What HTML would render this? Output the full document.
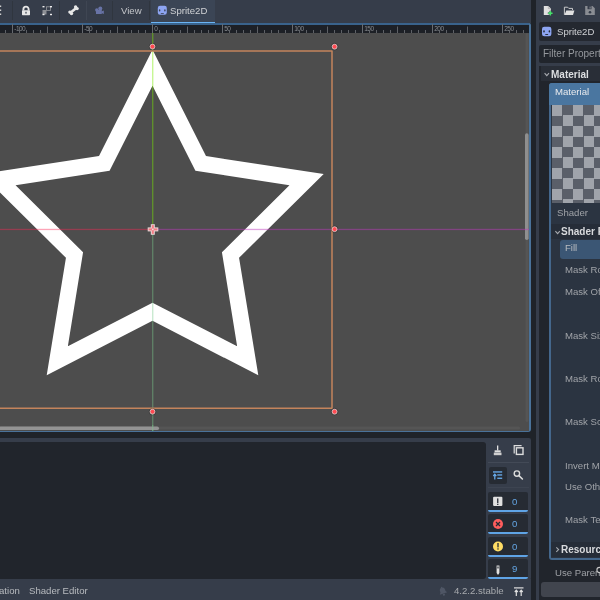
<!DOCTYPE html>
<html><head><meta charset="utf-8">
<style>
*{box-sizing:border-box;margin:0;padding:0}
html,body{width:600px;height:600px;overflow:hidden;background:#1f2329;font-family:"Liberation Sans",sans-serif;font-size:9.6px;color:#c8cacd}
.a{position:absolute}
.t{position:absolute;white-space:nowrap;line-height:12px;will-change:transform}
svg{position:absolute;overflow:visible;will-change:transform}
</style></head><body>
<!-- top toolbar -->
<div class="a" style="left:0;top:0;width:531px;height:23px;background:#363d4a"></div>
<div class="a" style="left:150.5px;top:0;width:64px;height:23px;background:#3b4555"></div>
<div class="a" style="left:150.5px;top:21.8px;width:64px;height:1.5px;background:#6ab4f5"></div>
<div class="a" style="left:12px;top:1px;width:1px;height:19px;background:#30363f"></div>
<div class="a" style="left:59px;top:1px;width:1px;height:19px;background:#30363f"></div>
<div class="a" style="left:86px;top:1px;width:1px;height:19px;background:#3f4653"></div>
<div class="a" style="left:112px;top:1px;width:1px;height:19px;background:#30363f"></div>
<div class="a" style="left:148.5px;top:1px;width:1px;height:19px;background:#30363f"></div>
<div class="t" style="left:120.5px;top:5px;color:#c4c6ca">View</div>
<div class="t" style="left:170px;top:5px;color:#cfd1d4">Sprite2D</div>
<svg style="left:0;top:0" width="600" height="40">
  <!-- partial dots at left -->
  <rect x="0" y="5.5" width="1.2" height="1.5" fill="#d0d0d0"/>
  <rect x="0" y="9.5" width="1.2" height="1.5" fill="#d0d0d0"/>
  <rect x="0" y="13.5" width="1.2" height="1.5" fill="#d0d0d0"/>
  <!-- lock -->
  <path d="M23.4,10.5 V9.2 A2.6,2.6 0 0 1 28.6,9.2 V10.5" fill="none" stroke="#e6e6e6" stroke-width="1.9"/>
  <rect x="22" y="10.2" width="8" height="5" rx="0.6" fill="#e6e6e6"/>
  <rect x="25.4" y="11.8" width="1.2" height="1.8" fill="#363d4a"/>
  <!-- group icon -->
  <rect x="42.5" y="10" width="4" height="4.5" fill="#8e9095"/>
  <rect x="46.5" y="6.8" width="4" height="3.6" fill="none" stroke="#8e9095" stroke-width="0.9"/>
  <rect x="42.5" y="6" width="2" height="1.4" fill="#eeeeee"/>
  <rect x="50" y="6" width="2" height="1.4" fill="#eeeeee"/>
  <rect x="42.5" y="13.8" width="2" height="1.4" fill="#eeeeee"/>
  <rect x="50" y="13.8" width="2" height="1.4" fill="#eeeeee"/>
  <!-- bone -->
  <g fill="#e8e8e8">
    <line x1="71" y1="12.3" x2="76" y2="8.3" stroke="#e8e8e8" stroke-width="2.6"/>
    <circle cx="69.9" cy="12.1" r="1.7"/><circle cx="71.5" cy="13.6" r="1.7"/>
    <circle cx="75.6" cy="7" r="1.7"/><circle cx="77.1" cy="8.6" r="1.7"/>
  </g>
  <!-- camera -->
  <g fill="#6873a6">
    <circle cx="96.8" cy="10" r="1.7"/><circle cx="100.3" cy="8.6" r="2"/>
    <rect x="96" y="10" width="5.8" height="4"/>
    <path d="M101.5,11.6 L103.8,10.4 V13.9 L101.5,12.9Z"/>
  </g>
  <!-- sprite2d icon tab -->
  <rect x="157.8" y="5.8" width="9" height="9" rx="2.2" fill="#8da5f3"/>
  <ellipse cx="159.6" cy="10.4" rx="0.75" ry="1.1" fill="#3c4453"/>
  <ellipse cx="164.9" cy="10.4" rx="0.75" ry="1.1" fill="#3c4453"/>
  <path d="M160.8,13 H163.8 V13.8 H160.8Z" fill="#3c4453"/>
  <!-- inspector toolbar -->
  <path d="M543.8,6 H548.3 L550.9,8.6 V15 H543.8Z" fill="#e0e0e0"/>
  <path d="M548.3,6 V8.6 H550.9" fill="#9a9a9a"/>
  <path d="M549.2,11 H551.4 V13 H553.4 V15 H551.4 V17 H549.2 V15 H547.2 V13 H549.2Z" fill="#45e06a" transform="translate(0,-1.6) scale(1)"/>
  <path d="M564.4,7.2 H567.6 L568.8,8.4 H572.5 V10 H566 L564.4,14.8Z" fill="none" stroke="#d8d8d8" stroke-width="0.9"/>
  <path d="M566.3,10.4 H574.4 L573,15 H564.4Z" fill="#e0e0e0"/>
  <path d="M585.2,6 H592.5 L594.8,8.3 V15 H585.2Z" fill="#8a8d93"/>
  <rect x="587.5" y="6" width="4" height="3.2" fill="#363d4a"/>
  <rect x="589.6" y="6.6" width="1" height="2" fill="#8a8d93"/>
  <circle cx="590" cy="12.3" r="1.3" fill="#363d4a"/>
</svg>
<!-- viewport -->
<div class="a" style="left:-4px;top:23px;width:535px;height:409.2px;background:#4a7299;border-radius:0 2px 3px 0"></div>
<div class="a" style="left:0;top:23px;width:529px;height:1.6px;background:#3a638c"></div>
<div class="a" style="left:0;top:24.5px;width:529px;height:8.5px;background:#1d2026"></div>
<div class="a" style="left:0;top:33px;width:529px;height:398px;background:#4d4d4d"></div>
<svg style="left:0;top:0" width="600" height="440">
<rect x="5.0" y="30" width="1" height="3" fill="#5e6167"/>
<rect x="12.0" y="24" width="1" height="9" fill="#666a70"/>
<text x="14.3" y="30.6" fill="#8a8d92" font-size="6.5" letter-spacing="-0.55">-100</text>
<rect x="19.0" y="30" width="1" height="3" fill="#5e6167"/>
<rect x="26.0" y="30" width="1" height="3" fill="#5e6167"/>
<rect x="33.0" y="30" width="1" height="3" fill="#5e6167"/>
<rect x="40.0" y="30" width="1" height="3" fill="#5e6167"/>
<rect x="47.0" y="26.5" width="1" height="6.5" fill="#5e6167"/>
<rect x="54.0" y="30" width="1" height="3" fill="#5e6167"/>
<rect x="61.0" y="30" width="1" height="3" fill="#5e6167"/>
<rect x="68.0" y="30" width="1" height="3" fill="#5e6167"/>
<rect x="75.0" y="30" width="1" height="3" fill="#5e6167"/>
<rect x="82.0" y="24" width="1" height="9" fill="#666a70"/>
<text x="84.3" y="30.6" fill="#8a8d92" font-size="6.5" letter-spacing="-0.55">-50</text>
<rect x="89.0" y="30" width="1" height="3" fill="#5e6167"/>
<rect x="96.0" y="30" width="1" height="3" fill="#5e6167"/>
<rect x="103.0" y="30" width="1" height="3" fill="#5e6167"/>
<rect x="110.0" y="30" width="1" height="3" fill="#5e6167"/>
<rect x="117.0" y="26.5" width="1" height="6.5" fill="#5e6167"/>
<rect x="124.0" y="30" width="1" height="3" fill="#5e6167"/>
<rect x="131.0" y="30" width="1" height="3" fill="#5e6167"/>
<rect x="138.0" y="30" width="1" height="3" fill="#5e6167"/>
<rect x="145.0" y="30" width="1" height="3" fill="#5e6167"/>
<rect x="152.0" y="24" width="1" height="9" fill="#666a70"/>
<text x="154.3" y="30.6" fill="#8a8d92" font-size="6.5" letter-spacing="-0.55">0</text>
<rect x="159.0" y="30" width="1" height="3" fill="#5e6167"/>
<rect x="166.0" y="30" width="1" height="3" fill="#5e6167"/>
<rect x="173.0" y="30" width="1" height="3" fill="#5e6167"/>
<rect x="180.0" y="30" width="1" height="3" fill="#5e6167"/>
<rect x="187.0" y="26.5" width="1" height="6.5" fill="#5e6167"/>
<rect x="194.0" y="30" width="1" height="3" fill="#5e6167"/>
<rect x="201.0" y="30" width="1" height="3" fill="#5e6167"/>
<rect x="208.0" y="30" width="1" height="3" fill="#5e6167"/>
<rect x="215.0" y="30" width="1" height="3" fill="#5e6167"/>
<rect x="222.0" y="24" width="1" height="9" fill="#666a70"/>
<text x="224.3" y="30.6" fill="#8a8d92" font-size="6.5" letter-spacing="-0.55">50</text>
<rect x="229.0" y="30" width="1" height="3" fill="#5e6167"/>
<rect x="236.0" y="30" width="1" height="3" fill="#5e6167"/>
<rect x="243.0" y="30" width="1" height="3" fill="#5e6167"/>
<rect x="250.0" y="30" width="1" height="3" fill="#5e6167"/>
<rect x="257.0" y="26.5" width="1" height="6.5" fill="#5e6167"/>
<rect x="264.0" y="30" width="1" height="3" fill="#5e6167"/>
<rect x="271.0" y="30" width="1" height="3" fill="#5e6167"/>
<rect x="278.0" y="30" width="1" height="3" fill="#5e6167"/>
<rect x="285.0" y="30" width="1" height="3" fill="#5e6167"/>
<rect x="292.0" y="24" width="1" height="9" fill="#666a70"/>
<text x="294.3" y="30.6" fill="#8a8d92" font-size="6.5" letter-spacing="-0.55">100</text>
<rect x="299.0" y="30" width="1" height="3" fill="#5e6167"/>
<rect x="306.0" y="30" width="1" height="3" fill="#5e6167"/>
<rect x="313.0" y="30" width="1" height="3" fill="#5e6167"/>
<rect x="320.0" y="30" width="1" height="3" fill="#5e6167"/>
<rect x="327.0" y="26.5" width="1" height="6.5" fill="#5e6167"/>
<rect x="334.0" y="30" width="1" height="3" fill="#5e6167"/>
<rect x="341.0" y="30" width="1" height="3" fill="#5e6167"/>
<rect x="348.0" y="30" width="1" height="3" fill="#5e6167"/>
<rect x="355.0" y="30" width="1" height="3" fill="#5e6167"/>
<rect x="362.0" y="24" width="1" height="9" fill="#666a70"/>
<text x="364.3" y="30.6" fill="#8a8d92" font-size="6.5" letter-spacing="-0.55">150</text>
<rect x="369.0" y="30" width="1" height="3" fill="#5e6167"/>
<rect x="376.0" y="30" width="1" height="3" fill="#5e6167"/>
<rect x="383.0" y="30" width="1" height="3" fill="#5e6167"/>
<rect x="390.0" y="30" width="1" height="3" fill="#5e6167"/>
<rect x="397.0" y="26.5" width="1" height="6.5" fill="#5e6167"/>
<rect x="404.0" y="30" width="1" height="3" fill="#5e6167"/>
<rect x="411.0" y="30" width="1" height="3" fill="#5e6167"/>
<rect x="418.0" y="30" width="1" height="3" fill="#5e6167"/>
<rect x="425.0" y="30" width="1" height="3" fill="#5e6167"/>
<rect x="432.0" y="24" width="1" height="9" fill="#666a70"/>
<text x="434.3" y="30.6" fill="#8a8d92" font-size="6.5" letter-spacing="-0.55">200</text>
<rect x="439.0" y="30" width="1" height="3" fill="#5e6167"/>
<rect x="446.0" y="30" width="1" height="3" fill="#5e6167"/>
<rect x="453.0" y="30" width="1" height="3" fill="#5e6167"/>
<rect x="460.0" y="30" width="1" height="3" fill="#5e6167"/>
<rect x="467.0" y="26.5" width="1" height="6.5" fill="#5e6167"/>
<rect x="474.0" y="30" width="1" height="3" fill="#5e6167"/>
<rect x="481.0" y="30" width="1" height="3" fill="#5e6167"/>
<rect x="488.0" y="30" width="1" height="3" fill="#5e6167"/>
<rect x="495.0" y="30" width="1" height="3" fill="#5e6167"/>
<rect x="502.0" y="24" width="1" height="9" fill="#666a70"/>
<text x="504.3" y="30.6" fill="#8a8d92" font-size="6.5" letter-spacing="-0.55">250</text>
<rect x="509.0" y="30" width="1" height="3" fill="#5e6167"/>
<rect x="516.0" y="30" width="1" height="3" fill="#5e6167"/>
<rect x="523.0" y="30" width="1" height="3" fill="#5e6167"/>
  <clipPath id="sc"><rect x="-40" y="51" width="400" height="360"/></clipPath>
  <path fill="#ffffff" fill-rule="evenodd" clip-path="url(#sc)" d="M152.50,49.70 L205.99,156.08 L323.69,174.08 L239.05,257.82 L258.30,375.32 L152.50,320.70 L46.70,375.32 L65.95,257.82 L-18.69,174.08 L99.01,156.08Z M152.50,85.70 L195.41,170.64 L289.45,185.20 L221.93,252.26 L237.14,346.20 L152.50,302.70 L67.86,346.20 L83.07,252.26 L15.55,185.20 L109.59,170.64Z"/>
  <!-- axes -->
  <rect x="152" y="33" width="1.4" height="192" fill="rgba(122,235,0,0.42)"/>
  <rect x="152" y="234" width="1.4" height="197" fill="rgba(122,202,139,0.4)"/>
  <rect x="0" y="228.8" width="148" height="1.3" fill="rgba(250,40,85,0.42)"/>
  <rect x="158" y="228.8" width="371" height="1.3" fill="rgba(190,60,190,0.47)"/>
  <!-- selection rect -->
  <path d="M-30,51 H332 V408.3 H-30" fill="none" stroke="#c4845c" stroke-width="1.5" stroke-linejoin="round"/>
  <g fill="none" stroke="rgba(30,30,30,0.4)" stroke-width="0.8"><circle cx="152.5" cy="46.6" r="3.3"/><circle cx="334.6" cy="46.7" r="3.3"/><circle cx="334.6" cy="229.2" r="3.3"/><circle cx="334.6" cy="411.7" r="3.3"/><circle cx="152.5" cy="411.7" r="3.3"/></g>
  <g fill="#ff4a52" stroke="#f0d4d4" stroke-width="0.75"><circle cx="152.5" cy="46.6" r="2.42"/><circle cx="334.6" cy="46.7" r="2.42"/><circle cx="334.6" cy="229.2" r="2.42"/><circle cx="334.6" cy="411.7" r="2.42"/><circle cx="152.5" cy="411.7" r="2.42"/></g>
  <!-- center cross -->
  <g fill="#e8d8d8">
    <rect x="147.7" y="227.4" width="10.6" height="4"/>
    <rect x="150.8" y="224.2" width="4" height="10.6"/>
  </g>
  <g fill="#f37c84">
    <rect x="148.6" y="228.4" width="8.8" height="2"/>
    <rect x="151.8" y="225.1" width="2" height="8.8"/>
  </g>
  <rect x="152" y="228.6" width="1.6" height="1.6" fill="#e8e0e0"/>
  <!-- scrollbars -->
  <rect x="0" y="426.5" width="520" height="3" rx="1.5" fill="#555555"/>
  <rect x="-4" y="426.4" width="163" height="3.7" rx="1.85" fill="#939393"/>
  <rect x="525.5" y="33" width="3" height="389" rx="1.5" fill="#555555"/>
  <rect x="525" y="133.3" width="3.6" height="106.7" rx="1.8" fill="#8f8f8f"/>
  <rect x="152" y="425" width="1.4" height="6" fill="rgba(122,202,139,0.4)"/>
  <rect x="525" y="228.8" width="4" height="1.3" fill="rgba(190,60,190,0.47)"/>
</svg>
<!-- bottom panel -->
<div class="a" style="left:-4px;top:437.6px;width:535px;height:142px;background:#363d4a;border-radius:2px"></div>
<div class="a" style="left:-4px;top:441.7px;width:489.7px;height:137.3px;background:#21252c;border-radius:3px"></div>
<div class="a" style="left:488px;top:462px;width:41px;height:1px;background:#434a57"></div>
<div class="a" style="left:488px;top:487.3px;width:41px;height:1px;background:#3d4451"></div>
<div class="a" style="left:488.6px;top:466.8px;width:18.3px;height:17px;background:#262b33;border-radius:2px"></div>
<!-- console buttons -->
<div class="a" style="left:488px;top:492px;width:40px;height:19.6px;background:#262b33;border-radius:2px;border-bottom:2px solid #5fa4e6"></div>
<div class="a" style="left:488px;top:514.2px;width:40px;height:19.6px;background:#262b33;border-radius:2px;border-bottom:2px solid #5fa4e6"></div>
<div class="a" style="left:488px;top:537px;width:40px;height:19.6px;background:#262b33;border-radius:2px;border-bottom:2px solid #5fa4e6"></div>
<div class="a" style="left:488px;top:559.3px;width:40px;height:19.6px;background:#262b33;border-radius:2px;border-bottom:2px solid #5fa4e6"></div>
<div class="t" style="left:511.5px;top:496px;color:#64a5e3">0</div>
<div class="t" style="left:511.5px;top:518px;color:#64a5e3">0</div>
<div class="t" style="left:511.5px;top:541px;color:#64a5e3">0</div>
<div class="t" style="left:511.5px;top:563px;color:#64a5e3">9</div>
<svg style="left:0;top:0" width="600" height="600">
  <!-- brush -->
  <rect x="497" y="445.5" width="1.3" height="5" fill="#e0e0e0"/>
  <path d="M494.6,450.3 H500.7 V452.4 H494.6Z" fill="#e0e0e0"/>
  <path d="M493.8,452.6 H501.5 V455.2 H493.8Z" fill="#d0d0d0"/>
  <!-- copy -->
  <path d="M514.2,453.5 V445.6 H521.6" fill="none" stroke="#dcdcdc" stroke-width="1.2"/>
  <rect x="516.4" y="447.8" width="6.6" height="6.6" fill="none" stroke="#dcdcdc" stroke-width="1.4"/>
  <!-- filter icon (blue) -->
  <rect x="493" y="471.3" width="9.2" height="1.3" fill="#6aaef0"/>
  <rect x="497.3" y="474.3" width="4.9" height="1.3" fill="#6aaef0"/>
  <rect x="497.3" y="477.6" width="4.9" height="1.3" fill="#6aaef0"/>
  <path d="M494.8,479.4 V475.5 M493.3,476 L494.8,474.2 L496.3,476" fill="none" stroke="#6aaef0" stroke-width="1.2"/>
  <!-- search -->
  <circle cx="516.9" cy="473.6" r="2.7" fill="none" stroke="#dcdcdc" stroke-width="1.4"/>
  <path d="M518.9,475.6 L522.4,479" stroke="#dcdcdc" stroke-width="1.6" stroke-linecap="round"/>
  <!-- info icon -->
  <rect x="493.1" y="496.8" width="9.3" height="9.3" rx="1" fill="#e0e0e0"/>
  <rect x="497.1" y="498.4" width="1.3" height="4.6" fill="#262b33"/>
  <rect x="497.1" y="503.7" width="1.3" height="1.3" fill="#262b33"/>
  <!-- error icon -->
  <circle cx="498" cy="524" r="5" fill="#ff5d5d"/>
  <path d="M496,522 L500,526 M500,522 L496,526" stroke="#262b33" stroke-width="1.3"/>
  <!-- warning icon -->
  <circle cx="498" cy="546.5" r="5" fill="#ffdd65"/>
  <rect x="497.35" y="543" width="1.3" height="4.4" fill="#262b33"/>
  <rect x="497.35" y="548.3" width="1.3" height="1.3" fill="#262b33"/>
  <!-- message icon -->
  <path d="M496.6,565.5 H499.4 V573 L498,575 L496.6,573Z" fill="#e0e0e0"/>
  <rect x="497.4" y="566.5" width="1.2" height="2" fill="#262b33"/>
  <!-- status bell -->
  <g transform="rotate(-18 442.7 591)" fill="#4f5665"><path d="M438.8,593.6 H446.6 L445.4,591.8 V590.2 A2.65,2.65 0 0 0 440.1,590.2 V591.8Z"/><circle cx="442.7" cy="594.9" r="1.1"/><circle cx="442.7" cy="587.4" r="0.7"/></g>
  <!-- expand icon -->
  <rect x="514" y="587.3" width="9.5" height="1.2" fill="#e0e0e0"/>
  <path d="M516.3,596 V590.5 M514.8,592 L516.3,590.2 L517.8,592 M521.2,596 V590.5 M519.7,592 L521.2,590.2 L522.7,592" fill="none" stroke="#e0e0e0" stroke-width="1.2"/>
</svg>
<!-- status bar -->
<div class="a" style="left:0;top:579px;width:531px;height:21px;background:#363d4a"></div>
<div class="t" style="left:-1.5px;top:585.4px;color:#b8bbbf">ation</div>
<div class="t" style="left:29px;top:585.4px;color:#b8bbbf">Shader Editor</div>
<div class="t" style="left:454px;top:585px;color:#a7aaae">4.2.2.stable</div>
<svg style="left:0;top:0" width="600" height="600">
  <g transform="rotate(-18 442.7 591)" fill="#4f5665"><path d="M438.8,593.6 H446.6 L445.4,591.8 V590.2 A2.65,2.65 0 0 0 440.1,590.2 V591.8Z"/><circle cx="442.7" cy="594.9" r="1.1"/><circle cx="442.7" cy="587.4" r="0.7"/></g>
  <rect x="514" y="587.3" width="9.5" height="1.2" fill="#e0e0e0"/>
  <path d="M516.3,596 V590.5 M514.8,592 L516.3,590.2 L517.8,592 M521.2,596 V590.5 M519.7,592 L521.2,590.2 L522.7,592" fill="none" stroke="#e0e0e0" stroke-width="1.2"/>
</svg>
<!-- inspector -->
<div class="a" style="left:536px;top:0;width:64px;height:600px;background:#363d4a"></div>
<svg style="left:0;top:0" width="600" height="30">
  <path d="M543.8,6 H548.3 L550.9,8.6 V15 H543.8Z" fill="#e0e0e0"/>
  <path d="M549.7,11 H551.1 V12.5 H552.6 V13.9 H551.1 V15.4 H549.7 V13.9 H548.2 V12.5 H549.7Z" fill="#45e06a" stroke="#363d4a" stroke-width="0.6" paint-order="stroke"/>
  <path d="M548.3,6 V8.6 H550.9" fill="none" stroke="#9a9a9a" stroke-width="0.6"/>
  <path d="M564.4,14.8 V7.2 H567.6 L568.8,8.4 H572.5 V10" fill="none" stroke="#d8d8d8" stroke-width="0.9"/>
  <path d="M566.3,10.4 H574.4 L573,15 H564.4Z" fill="#e0e0e0"/>
  <path d="M585.2,6 H592.5 L594.8,8.3 V15 H585.2Z" fill="#8a8d93"/>
  <rect x="587.5" y="6" width="4" height="3.2" fill="#363d4a"/>
  <rect x="589.6" y="6.6" width="1" height="2" fill="#8a8d93"/>
  <circle cx="590" cy="12.3" r="1.3" fill="#363d4a"/>
</svg>
<div class="a" style="left:539px;top:22px;width:65px;height:19px;background:#242830;border-radius:2px"></div>
<svg style="left:0;top:0" width="600" height="40">
  <rect x="542" y="26.7" width="9.4" height="9.6" rx="2.3" fill="#8da5f3"/>
  <ellipse cx="544" cy="31.4" rx="0.8" ry="1.1" fill="#242830"/>
  <ellipse cx="549.4" cy="31.4" rx="0.8" ry="1.1" fill="#242830"/>
  <path d="M545.3,34.1 H548.1 V35 H545.3Z" fill="#242830"/>
</svg>
<div class="t" style="left:557px;top:26px;color:#cfd1d4">Sprite2D</div>
<div class="a" style="left:539px;top:44.5px;width:65px;height:18.3px;background:#21252c;border-radius:2px"></div>
<div class="t" style="left:542.5px;top:47.8px;color:#95989d;font-size:10px">Filter Properties</div>
<div class="a" style="left:539px;top:66.2px;width:65px;height:540px;background:#21252c"></div>
<div class="a" style="left:541px;top:66.2px;width:65px;height:15.2px;background:#292e37"></div>
<div class="t" style="left:551px;top:68.8px;color:#dcdee1;font-weight:bold;font-size:10px">Material</div>
<div class="a" style="left:549px;top:82.6px;width:60px;height:477.5px;background:#44678c;border-radius:3px"></div>
<div class="a" style="left:549px;top:82.6px;width:60px;height:22px;background:#4a76a0;border-radius:3px 0 0 0"></div>
<div class="t" style="left:555px;top:86px;color:#e8eaed">Material</div>
<div class="a" style="left:551px;top:104.6px;width:60px;height:453.7px;background:#2b3441"></div>
<!-- checker -->
<div class="a" style="left:551.6px;top:104.6px;width:60px;height:98.7px;background:conic-gradient(#5a5f69 0 25%,#a0a4ab 0 50%,#5a5f69 0 75%,#a0a4ab 0);background-size:21px 21px"></div>
<div class="t" style="left:557px;top:206.9px;color:#a0a3a8">Shader</div>
<div class="a" style="left:551px;top:224.3px;width:60px;height:14.5px;background:#262d38"></div>
<div class="t" style="left:561px;top:226px;color:#d8dadd;font-weight:bold;font-size:10px">Shader Parameters</div>
<div class="a" style="left:560px;top:240px;width:60px;height:18.6px;background:#3b5674;border-radius:3px"></div>
<div class="t" style="left:565px;top:241.8px;color:#b8bbbf">Fill</div>
<div class="t" style="left:565px;top:264px;color:#a0a3a8">Mask Rotation</div>
<div class="t" style="left:565px;top:285.5px;color:#a0a3a8">Mask Offset</div>
<div class="t" style="left:565px;top:329.5px;color:#a0a3a8">Mask Size</div>
<div class="t" style="left:565px;top:372.7px;color:#a0a3a8">Mask Rotation</div>
<div class="t" style="left:565px;top:416.2px;color:#a0a3a8">Mask Scale</div>
<div class="t" style="left:565px;top:459.9px;color:#a0a3a8">Invert Mask</div>
<div class="t" style="left:565px;top:481px;color:#a0a3a8">Use Other</div>
<div class="t" style="left:565px;top:514.3px;color:#a0a3a8">Mask Texture</div>
<div class="a" style="left:551px;top:541.7px;width:60px;height:15.8px;background:#262d38"></div>
<div class="t" style="left:561.3px;top:544px;color:#d8dadd;font-weight:bold;font-size:10px">Resource</div>
<div class="t" style="left:554.7px;top:566.6px;color:#9da0a5">Use Parent</div>
<svg style="left:0;top:0" width="600" height="600"><circle cx="599.5" cy="570" r="2.6" fill="#21252c" stroke="#c8c8c8" stroke-width="1.1"/></svg>
<div class="a" style="left:541.3px;top:581.7px;width:65px;height:15px;background:#41454e;border-radius:3px"></div>
<svg style="left:0;top:0" width="600" height="600">
  <path d="M544.6,73.2 L546.8,75.6 L549,73.2" fill="none" stroke="#a8abb0" stroke-width="1.1"/>
  <path d="M555.4,231.2 L557.6,233.6 L559.8,231.2" fill="none" stroke="#a8abb0" stroke-width="1.1"/>
  <path d="M556.3,547.4 L558.6,549.6 L556.3,551.8" fill="none" stroke="#a8abb0" stroke-width="1.1"/>
</svg>
</body></html>
